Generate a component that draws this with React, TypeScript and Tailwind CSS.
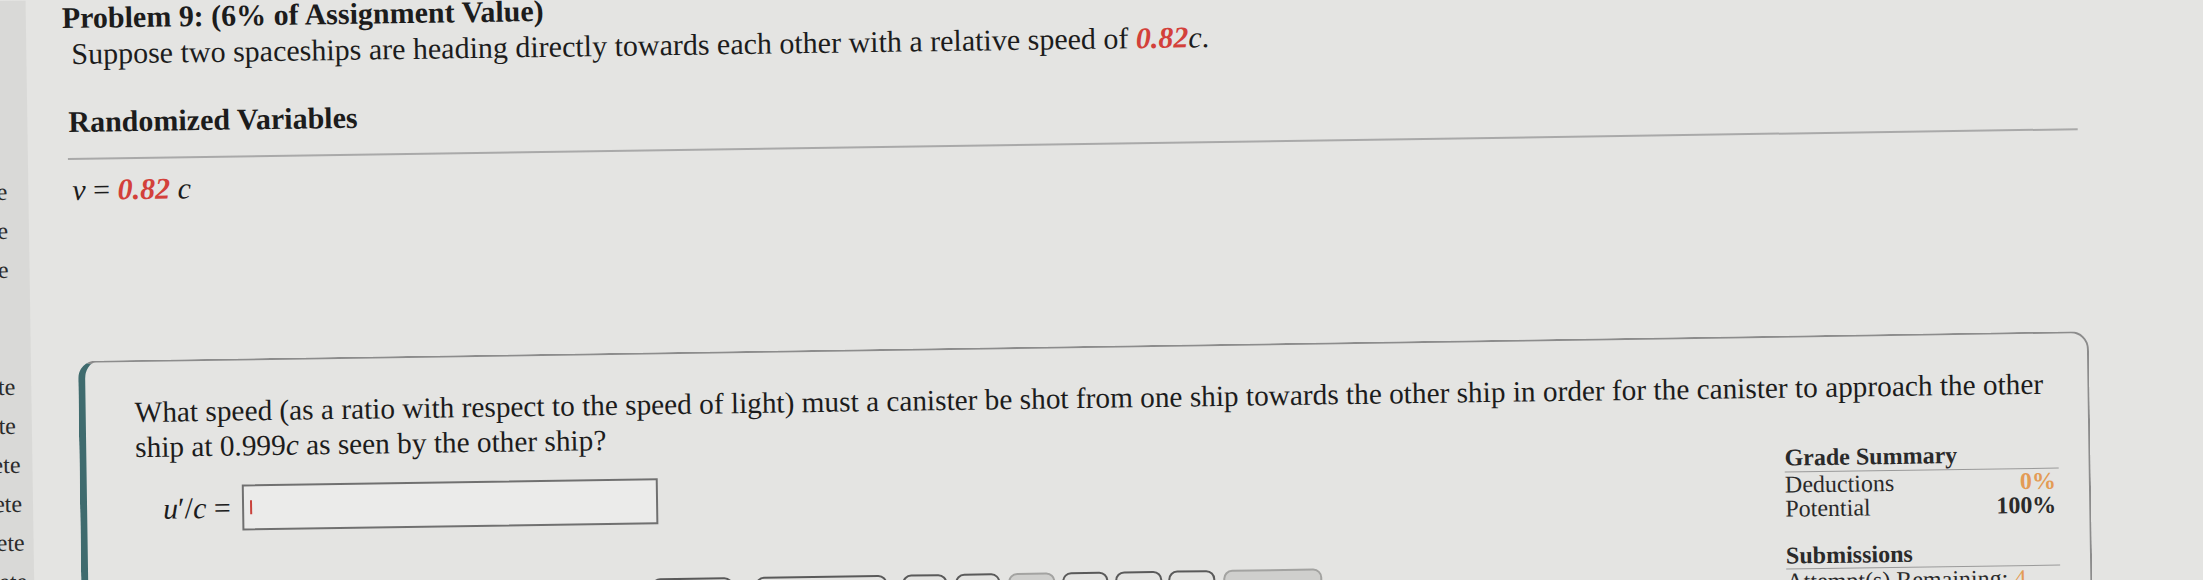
import React from "react";

// left nav column: only the ends of the words show at the window edge
const sideRows = [
  { word: "Complete", pr: "pr-[21px]" },
  { word: "Complete", pr: "pr-[21px]" },
  { word: "Complete", pr: "pr-[21px]" },
  { word: "", pr: "pr-[21px]" },
  { word: "", pr: "pr-[21px]" },
  { word: "Complete", pr: "pr-[16px]" },
  { word: "Complete", pr: "pr-[16px]" },
  { word: "Complete", pr: "pr-[12px]" },
  { word: "Complete", pr: "pr-[11px]" },
  { word: "Complete", pr: "pr-[9px]" },
  { word: "Complete", pr: "pr-[7px]" },
];

// keypad buttons under the answer field (only their tops are in view)
const keys = [
  { w: "w-[82px]", ml: "ml-[0px]", grey: false },
  { w: "w-[132px]", ml: "ml-[22px]", grey: false },
  { w: "w-[45px]", ml: "ml-[15px]", grey: false },
  { w: "w-[45px]", ml: "ml-[8px]", grey: false },
  { w: "w-[47px]", ml: "ml-[8px]", grey: true },
  { w: "w-[46px]", ml: "ml-[7px]", grey: false },
  { w: "w-[47px]", ml: "ml-[7px]", grey: false },
  { w: "w-[47px]", ml: "ml-[6px]", grey: false },
  { w: "w-[99px]", ml: "ml-[8px]", grey: true },
];

function Sidebar() {
  return (
    <div className="w-[40px] shrink-0 overflow-hidden bg-[#d9d9d7] pt-[172px] text-[24px] leading-[39px] text-[#2b2b2b]">
      {sideRows.map((row, i) => (
        <div key={i} className={`flex h-[39px] justify-end whitespace-nowrap ${row.pr}`}>
          {row.word}
        </div>
      ))}
    </div>
  );
}

function GradeSummary() {
  return (
    <div className="mt-[6px] w-[274px] text-[24px] text-[#2a2a2a]">
      <div className="border-b border-[#9a9a9a] pb-[2px] font-bold leading-[23px]">Grade Summary</div>
      <div className="flex justify-between pr-[3px] leading-[24px]">
        <span>Deductions</span>
        <span className="font-bold text-[#e39b55]">0%</span>
      </div>
      <div className="flex justify-between pr-[3px] leading-[24px]">
        <span>Potential</span>
        <span className="font-bold">100%</span>
      </div>
      <div className="mt-[23px] border-b border-[#9a9a9a] pb-[1px] font-bold leading-[24px]">Submissions</div>
      <div className="leading-[24px]">
        Attempt(s) Remaining: <span className="text-[#e39b55]">4</span>
      </div>
    </div>
  );
}

export default function App() {
  return (
    <div className="h-[580px] w-[2203px] overflow-hidden bg-[#e4e4e2] font-['Liberation_Serif',serif] text-[#1c1c1c]">
      {/* the whole screen is tilted a little, as in the photo */}
      <div className="-ml-[10px] flex h-[720px] w-[2300px] origin-[80px_300px] rotate-[-0.85deg]">
        <Sidebar />

        <main className="flex flex-1 flex-col items-start">
          <h1 className="ml-[36px] mt-[3px] whitespace-nowrap text-[30px] font-bold leading-[30px]">
            Problem 9: (6% of Assignment Value)
          </h1>
          <p className="ml-[45px] mt-[4px] whitespace-nowrap text-[30px] leading-[34px]">
            Suppose two spaceships are heading directly towards each other with a relative speed of{" "}
            <b className="italic text-[#d3403a]">0.82</b>
            <i>c</i>.
          </p>

          <h2 className="ml-[41px] mt-[35px] text-[30px] font-bold leading-[32px]">Randomized Variables</h2>
          <div className="ml-[40px] mt-[20px] h-[2px] w-[2010px] bg-[#a9a9a9]" />
          <p className="ml-[44px] mt-[13px] whitespace-nowrap text-[30px] leading-[34px]">
            <i>v</i> = <b className="italic text-[#d3403a]">0.82</b> <i>c</i>
          </p>

          {/* question card */}
          <div className="ml-[47px] mt-[154px] h-[420px] w-[2011px] rounded-t-[18px] border-l-[7px] border-r-2 border-t-2 border-[#8c8c8c] border-l-[#3f6b6e] pl-[49px] pr-[30px] pt-[33px]">
            <p className="whitespace-nowrap text-[29.3px] leading-[35px]">
              <span className="block">
                What speed (as a ratio with respect to the speed of light) must a canister be shot from one ship towards the other ship in order for the canister to approach the other
              </span>
              <span className="block">
                ship at 0.999<i>c</i> as seen by the other ship?
              </span>
            </p>

            <div className="flex items-start justify-between">
              <div className="flex flex-col">
                <div className="ml-[27px] mt-[21px] flex items-center">
                  <span className="whitespace-nowrap text-[30px] leading-[35px]">
                    <i>u</i>′/<i>c</i> =
                  </span>
                  <div className="ml-[11px] flex h-[46px] w-[416px] items-center border-2 border-[#707070] bg-[#ebebea] pl-[6px]">
                    <div className="h-[14px] w-[2px] bg-[#c9423c]" />
                  </div>
                </div>

                <div className="ml-[514px] mt-[54px] flex">
                  {keys.map((k, i) => (
                    <div
                      key={i}
                      className={`h-[40px] rounded-[9px] border-2 ${k.w} ${k.ml} ${
                        k.grey ? "border-[#a3a3a1] bg-[#cfcfcd]" : "border-[#5a5a5a]"
                      }`}
                    />
                  ))}
                </div>
              </div>

              <GradeSummary />
            </div>
          </div>
        </main>
      </div>
    </div>
  );
}
